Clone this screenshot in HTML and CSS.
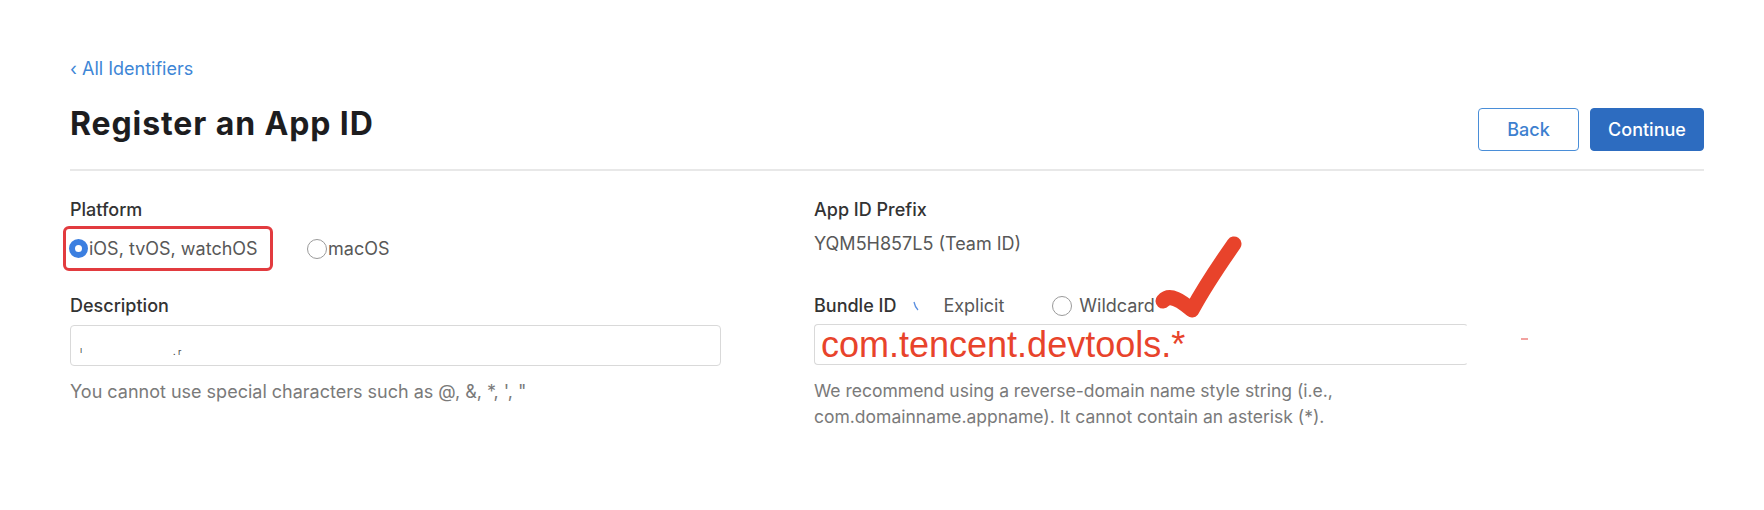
FILE: index.html
```html
<!DOCTYPE html>
<html lang="en">
<head>
<meta charset="utf-8">
<title>Register an App ID</title>
<link rel="stylesheet" href="styles.css">
</head>
<body>
<div class="page">
  <a class="back-link" href="#">‹ All Identifiers</a>
  <div class="title-row">
    <h1 class="title">Register an App ID</h1>
    <div class="actions">
      <button class="btn btn-outline">Back</button>
      <button class="btn btn-primary">Continue</button>
    </div>
  </div>
  <div class="rule"></div>
  <div class="form-grid">
    <div class="col col-left">
      <div class="label">Platform</div>
      <div class="radio-row">
        <div class="highlight-box">
          <span class="radio radio-on"></span><span class="opt-text">iOS, tvOS, watchOS</span>
        </div>
        <div class="radio-opt">
          <span class="radio"></span><span class="opt-text">macOS</span>
        </div>
      </div>
      <div class="label label-desc">Description</div>
      <div class="input input-desc"><span class="ghost g1">ı</span><span class="ghost g2">. r</span></div>
      <div class="help help-left">You cannot use special characters such as @, &amp;, *, ', "</div>
    </div>
    <div class="col col-right">
      <div class="label">App ID Prefix</div>
      <div class="value">YQM5H857L5 (Team ID)</div>
      <div class="bundle-row">
        <span class="label">Bundle ID</span>
        <svg class="tick" width="6" height="10" viewBox="0 0 6 10"><path d="M1 1 Q2 6 5 9" stroke="#5a8fe0" stroke-width="1.3" fill="none"/></svg>
        <span class="opt-text explicit">Explicit</span>
        <span class="radio wild-radio"></span><span class="opt-text">Wildcard</span>
      </div>
      <div class="input input-bundle"><span class="bundle-text">com.tencent.devtools.*</span></div>
      <div class="help help-right">We recommend using a reverse-domain name style string (i.e.,<br>com.domainname.appname). It cannot contain an asterisk (*).</div>
    </div>
  </div>
  <svg class="check-mark" width="110" height="110" viewBox="0 0 110 110">
    <path d="M13 79 C20 71 31 79 42 88 C55 64 70 42 84 22" stroke="#e8432b" stroke-width="15" stroke-linecap="round" stroke-linejoin="round" fill="none"/>
  </svg>
  <span class="red-dash"></span>
</div>
</body>
</html>
```
FILE: styles.css
```css
* { box-sizing: border-box; }
body {
  margin: 0;
  background: #fff;
  font-family: "Inter", "Liberation Sans", Arial, sans-serif;
  color: #333;
}
.page {
  position: relative;
  padding: 58px 60px 0 70px;
  width: 1764px;
  height: 510px;
}
.back-link {
  display: block;
  font-size: 18px;
  line-height: 22px;
  color: #3d86d6;
  text-decoration: none;
}
.title-row {
  display: flex;
  justify-content: space-between;
  align-items: flex-start;
  margin-top: 25px;
}
.title {
  margin: 0;
  font-size: 32px;
  line-height: 38px;
  letter-spacing: 0.9px;
  font-weight: 700;
  color: #1d1d1f;
}
.actions {
  display: flex;
  gap: 11px;
  margin-top: 3px;
}
.btn {
  height: 43px;
  border-radius: 4px;
  font-family: inherit;
  font-size: 18px;
  font-weight: 500;
  padding: 0;
}
.btn-outline {
  width: 101px;
  background: #fff;
  border: 1px solid #4a8ed8;
  color: #3d80cf;
}
.btn-primary {
  width: 114px;
  background: #2d6cc0;
  border: 1px solid #2d6cc0;
  color: #fff;
}
.rule {
  height: 2px;
  background: #e8e8e8;
  margin-top: 18px;
}
.form-grid {
  display: grid;
  grid-template-columns: 744px 1fr;
  padding-top: 28px;
}
.label {
  font-size: 18px;
  line-height: 22px;
  font-weight: 500;
  color: #333;
}
.radio-row {
  display: flex;
  align-items: center;
  margin-top: 5px;
  margin-left: -7px;
}
.highlight-box {
  display: flex;
  align-items: center;
  height: 45px;
  width: 210px;
  border: 3px solid #e23b3f;
  border-radius: 6px;
  padding-left: 3px;
}
.radio-opt {
  display: flex;
  align-items: center;
  margin-left: 34px;
}
.radio {
  display: inline-block;
  width: 20px;
  height: 20px;
  border-radius: 50%;
  border: 1px solid #9a9a9a;
  background: #fff;
  flex: none;
}
.radio-on {
  width: 19px;
  height: 19px;
  border: 6px solid #3b7fe0;
  background: #fff;
}
.opt-text {
  font-size: 18px;
  line-height: 22px;
  color: #585858;
  margin-left: 1px;
}
.label-desc {
  margin-top: 24px;
}
.input {
  position: relative;
  height: 41px;
  border: 1px solid #d9d9d9;
  border-radius: 4px;
  margin-top: 8px;
}
.input-desc {
  width: 651px;
}
.ghost {
  position: absolute;
  font-size: 9px;
  color: #444;
  top: 18px;
}
.g1 { left: 9px; }
.g2 { left: 102px; top: 20px; }
.help {
  color: #7a7a7a;
}
.help-left {
  font-size: 18px;
  margin-top: 15px;
  line-height: 22px;
}
.value {
  font-size: 18px;
  line-height: 22px;
  color: #585858;
  margin-top: 12px;
}
.bundle-row {
  display: flex;
  align-items: center;
  margin-top: 40px;
  height: 22px;
}
.tick {
  margin-left: 17px;
}
.explicit {
  margin-left: 24px;
}
.wild-radio {
  margin-left: 48px;
  margin-right: 6px;
}
.input-bundle {
  width: 654px;
  margin-top: 7px;
  border-right-color: transparent;
  display: flex;
  align-items: center;
}
.bundle-text {
  font-family: "Liberation Sans", Arial, sans-serif;
  font-size: 36px;
  color: #e8432b;
  padding-left: 6px;
  line-height: 1;
}
.help-right {
  font-size: 17.5px;
  margin-top: 13px;
  line-height: 26px;
}
.check-mark {
  position: absolute;
  left: 1150px;
  top: 222px;
}
.red-dash {
  position: absolute;
  left: 1521px;
  top: 338px;
  width: 7px;
  height: 2px;
  background: #f2a2a0;
}
```
